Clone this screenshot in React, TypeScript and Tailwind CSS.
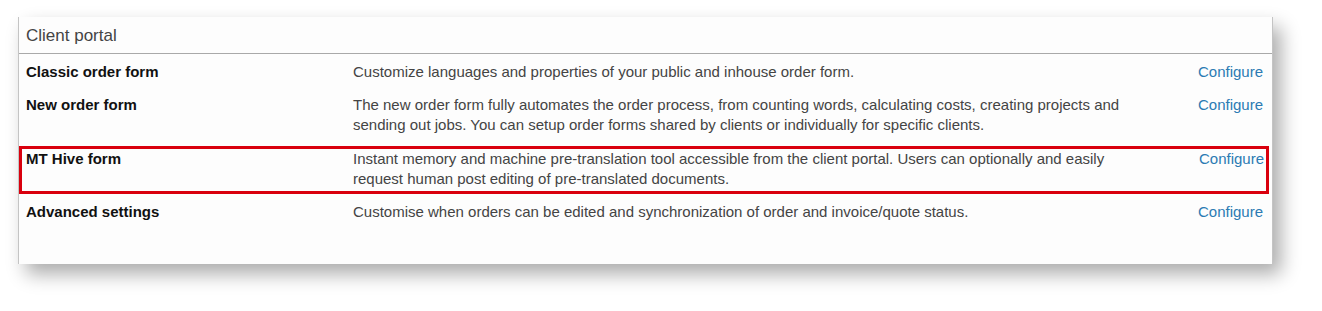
import React from "react";

type Row = { label: string; text: string; highlight?: boolean };

const rows: Row[] = [
  {
    label: "Classic order form",
    text: "Customize languages and properties of your public and inhouse order form.",
  },
  {
    label: "New order form",
    text: "The new order form fully automates the order process, from counting words, calculating costs, creating projects and sending out jobs. You can setup order forms shared by clients or individually for specific clients.",
  },
  {
    label: "MT Hive form",
    text: "Instant memory and machine pre-translation tool accessible from the client portal. Users can optionally and easily request human post editing of pre-translated documents.",
    highlight: true,
  },
  {
    label: "Advanced settings",
    text: "Customise when orders can be edited and synchronization of order and invoice/quote status.",
  },
];

const App: React.FC = () => {
  return (
    <div className="w-[1322px] h-[311px] bg-white pt-[17px] pl-[18px] font-['Liberation_Sans',Arial,sans-serif]">
      <div className="w-[1255px] h-[247px] bg-[#fdfdfd] border-x border-[#c4c4c4] shadow-[8px_10px_18px_rgba(0,0,0,0.33)]">
        {/* Header */}
        <div className="h-[37px] border-b border-[#a9a9a9] px-[7px] pt-[2px] flex items-center">
          <span className="text-[17px] text-[#444]">Client portal</span>
        </div>

        {/* Rows */}
        <div className="pt-[1px]">
          {rows.map((row, i) => (
            <div
              key={row.label}
              className={
                row.highlight
                  ? "mt-[5px] mr-[3px] flex text-[15px] leading-[20px] border-[3px] border-[#d9000d] pb-[2px] pl-[4px] pr-[2px]"
                  : i === 3
                    ? "flex text-[15px] leading-[20px] pt-[8px] pb-[6px] pl-[7px] pr-[9px]"
                    : "flex text-[15px] leading-[20px] pt-[7px] pb-[6px] pl-[7px] pr-[9px]"
              }
            >
              <div className="w-[327px] shrink-0 font-bold text-[#111]">{row.label}</div>
              <div className="w-[790px] shrink-0 text-[#444]">{row.text}</div>
              <div className="flex-1 text-right text-[#2b7bb3]">Configure</div>
            </div>
          ))}
        </div>
      </div>
    </div>
  );
};

export default App;
